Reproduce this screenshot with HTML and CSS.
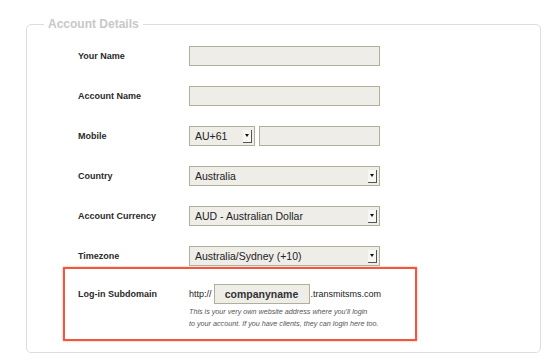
FILE: index.html
```html
<!DOCTYPE html>
<html lang="en">
<head>
    <meta charset="UTF-8">
    <title>Account Details</title>
    <link rel="stylesheet" href="styles.css">
</head>
<body>
    <fieldset class="account">
        <legend>Account Details</legend>

        <div class="row">
            <label>Your Name</label>
            <div class="field wide"></div>
        </div>

        <div class="row">
            <label>Account Name</label>
            <div class="field wide"></div>
        </div>

        <div class="row">
            <label>Mobile</label>
            <div class="mobile">
                <div class="field select code"><span>AU+61</span><span class="arrow"></span></div>
                <div class="field phone"></div>
            </div>
        </div>

        <div class="row">
            <label>Country</label>
            <div class="field select wide"><span>Australia</span><span class="arrow"></span></div>
        </div>

        <div class="row">
            <label>Account Currency</label>
            <div class="field select wide"><span>AUD - Australian Dollar</span><span class="arrow"></span></div>
        </div>

        <div class="row last">
            <label>Timezone</label>
            <div class="field select wide"><span>Australia/Sydney (+10)</span><span class="arrow"></span></div>
        </div>

        <!-- highlighted subdomain row -->
        <div class="highlight">
            <div class="row">
                <label>Log-in Subdomain</label>
                <div class="subdomain">
                    <span>http://</span>
                    <div class="field company">companyname</div>
                    <span>.transmitsms.com</span>
                </div>
            </div>
            <p class="help">This is your very own website address where you'll login<br>to your account. If you have clients, they can login here too.</p>
        </div>
    </fieldset>
</body>
</html>
```

FILE: styles.css
```css
body {
    margin: 0;
    background-color: #ffffff;
    font-family: "Liberation Sans", Arial, sans-serif;
    color: #222;
}

.account {
    box-sizing: border-box;
    width: 515px;
    margin: 17px 0 0 26px;
    padding: 15px 10px 11px 51px;
    border: 1px solid #dddddd;
    border-radius: 5px;
}

.account legend {
    margin-left: -34px;
    padding: 0 4px;
    font-size: 12px;
    line-height: 14px;
    font-weight: bold;
    color: #c8c8c8;
}

.row {
    display: grid;
    grid-template-columns: 111px 1fr;
    align-items: center;
    height: 20px;
    margin-bottom: 20px;
}

.row.last {
    margin-bottom: 1px;
}

.row label {
    font-size: 9px;
    font-weight: bold;
    color: #2a2a2a;
}

.field {
    box-sizing: border-box;
    height: 20px;
    background-color: #eeede8;
    border: 1px solid #b0af99;
    font-size: 10.5px;
    color: #222;
}

.wide {
    width: 191px;
}

.mobile {
    display: flex;
    gap: 4px;
}

.code {
    width: 66px;
}

.phone {
    width: 121px;
}

.select {
    display: flex;
    align-items: center;
    justify-content: space-between;
    padding: 0 2px 0 5px;
}

.arrow {
    box-sizing: border-box;
    width: 9px;
    height: 13px;
    background-color: #f6f6f3;
    border-right: 1px solid #555;
    border-bottom: 1px solid #555;
    display: flex;
    align-items: center;
    justify-content: center;
}

.arrow::after {
    content: "";
    border-left: 2.5px solid transparent;
    border-right: 2.5px solid transparent;
    border-top: 3px solid #111;
}

.highlight {
    box-sizing: border-box;
    width: 354px;
    margin-left: -15px;
    padding: 15px 0 9px 13px;
    border: 2px solid #f0573d;
    box-shadow: 0 0 2px rgba(240, 87, 61, 0.5);
}

.highlight .row {
    margin-bottom: 0;
}

.subdomain {
    display: flex;
    align-items: center;
    font-size: 9px;
    color: #222;
}

.company {
    width: 96px;
    margin: 0 1px 0 2px;
    display: flex;
    align-items: center;
    justify-content: center;
    font-size: 10.5px;
    font-weight: bold;
    color: #333;
}

.help {
    margin: 2px 0 0 111px;
    font-size: 7.2px;
    line-height: 12px;
    font-style: italic;
    color: #555;
}
```
